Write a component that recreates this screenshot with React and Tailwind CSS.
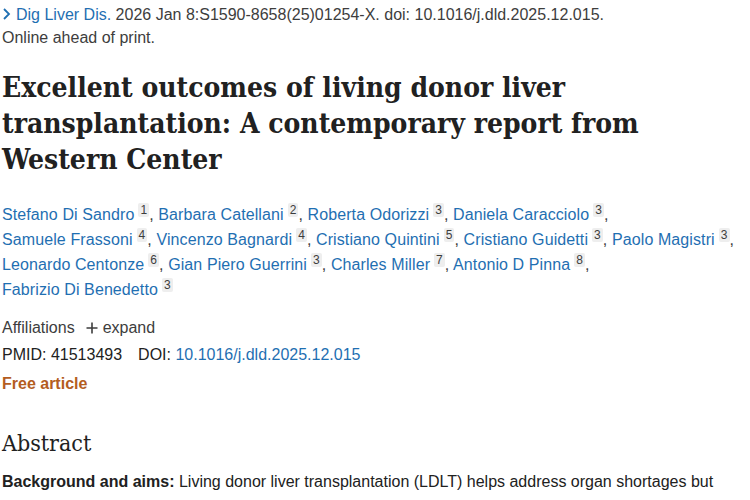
import React from "react";

const authors = [
  ["Stefano Di Sandro", "1"],
  ["Barbara Catellani", "2"],
  ["Roberta Odorizzi", "3"],
  ["Daniela Caracciolo", "3"],
  ["Samuele Frassoni", "4"],
  ["Vincenzo Bagnardi", "4"],
  ["Cristiano Quintini", "5"],
  ["Cristiano Guidetti", "3"],
  ["Paolo Magistri", "3"],
  ["Leonardo Centonze", "6"],
  ["Gian Piero Guerrini", "3"],
  ["Charles Miller", "7"],
  ["Antonio D Pinna", "8"],
  ["Fabrizio Di Benedetto", "3"],
];

const breaksAfter = new Set([3, 8, 12]);

const serif = { fontFamily: '"DejaVu Serif Condensed", "DejaVu Serif", "Liberation Serif", serif', fontStretch: "condensed" };

function Sup({ n }) {
  return (
    <span className="relative -top-[6px] ml-[4px] inline-block rounded-[2px] bg-[#eeeeee] px-[2px] text-[12px] leading-[14px] text-[#3d3d3d]">
      {n}
    </span>
  );
}

export default function App() {
  return (
    <div
      className="min-h-[500px] w-[750px] overflow-hidden bg-white pl-[2px] text-[16px] text-[#212121]"
      style={{ fontFamily: '"Liberation Sans", Arial, sans-serif' }}
    >
      <div className="pt-[3px] leading-[23px]">
        <div className="whitespace-nowrap text-[#3d3d3d]">
          <span className="text-[#1f6fb2]">
            <svg width="9" height="14" viewBox="0 0 9 14" className="mr-[5px] inline-block align-[-1px]">
              <path d="M2 2 L7 7 L2 12" fill="none" stroke="#1f6fb2" strokeWidth="1.8" />
            </svg>
            Dig Liver Dis.
          </span>{" "}
          2026 Jan 8:S1590-8658(25)01254-X. doi: 10.1016/j.dld.2025.12.015.
        </div>
        <div className="text-[#3d3d3d]">Online ahead of print.</div>
      </div>

      <h1
        className="mt-[21px] whitespace-nowrap text-[28px] font-bold leading-[36px] text-[#212121]"
        style={serif}
      >
        Excellent outcomes of living donor liver
        <br />
        transplantation: A contemporary report from
        <br />
        Western Center
      </h1>

      <div className="mt-[24px] w-[748px] leading-[25px] tracking-[0.1px]">
        {authors.map(([name, n], i) => (
          <React.Fragment key={name}>
            <span className="text-[#1f6fb2]">{name}</span>
            <Sup n={n} />
            {i < authors.length - 1 && <span className="text-[#3d3d3d]">, </span>}
            {breaksAfter.has(i) && <br />}
          </React.Fragment>
        ))}
      </div>

      <div className="mt-[14px] flex items-center leading-[24px] text-[#3d3d3d]">
        <span>Affiliations</span>
        <span className="ml-[10px] mr-[4px] inline-flex h-[14px] w-[14px] items-center justify-center">
          <svg width="12" height="12" viewBox="0 0 12 12">
            <path d="M6 0.5 V11.5 M0.5 6 H11.5" stroke="#3d3d3d" strokeWidth="1.6" />
          </svg>
        </span>
        <span>expand</span>
      </div>

      <div className="mt-[3px] leading-[24px] text-[#212121]">
        PMID: 41513493<span className="ml-[16px]">DOI: </span>
        <span className="text-[#1f6fb2]">10.1016/j.dld.2025.12.015</span>
      </div>

      <div className="mt-[5px] font-bold leading-[24px] text-[#b45d1f]">Free article</div>

      <h2 className="mt-[32px] text-[23px] leading-[30px] text-[#212121]" style={serif}>
        Abstract
      </h2>

      <p className="mt-[12px] leading-[24px] text-[#212121]">
        <b>Background and aims:</b> Living donor liver transplantation (LDLT) helps address organ shortages but
      </p>
    </div>
  );
}
